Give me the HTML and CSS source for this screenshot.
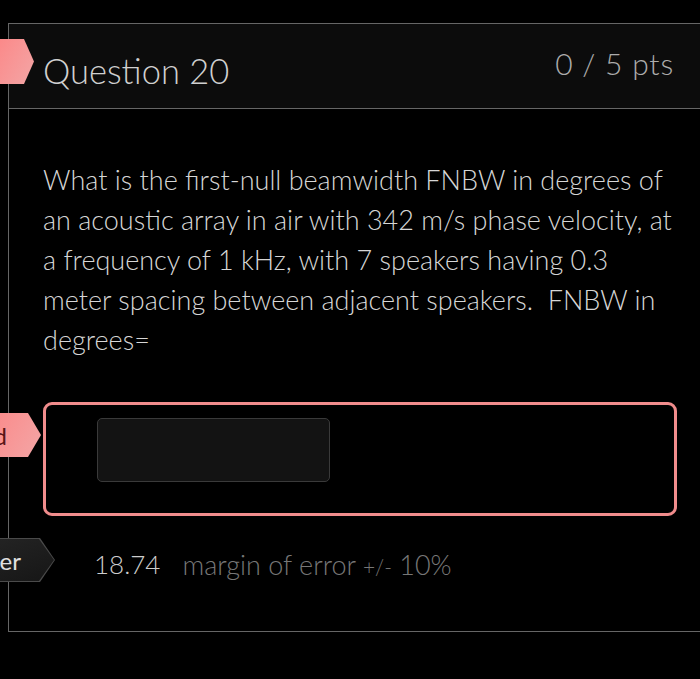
FILE: index.html
```html
<!DOCTYPE html>
<html lang="en">
<head>
<meta charset="utf-8">
<title>Question 20</title>
<link rel="stylesheet" href="styles.css">
</head>
<body>
<div class="page">
  <section class="card">
    <header class="card-header">
      <div class="tag tag-status"></div>
      <h2 class="q-title">Question 20</h2>
      <div class="q-points">0 / 5 pts</div>
    </header>
    <div class="card-body">
      <p class="q-text">What is the first-null beamwidth FNBW in degrees of an acoustic array in air with 342 m/s phase velocity, at a frequency of 1 kHz, with 7 speakers having 0.3 meter spacing between adjacent speakers.&nbsp; FNBW in degrees=</p>
      <div class="answer">
        <div class="tag tag-answered"><span>You Answered</span></div>
        <div class="answer-input"></div>
      </div>
      <div class="correct">
        <div class="tag tag-correct"><div class="tag-inner"><span>Correct Answer</span></div></div>
        <span class="correct-value">18.74</span>
        <span class="correct-margin">margin of error <span class="pm">+/-</span> 10%</span>
      </div>
    </div>
  </section>
</div>
</body>
</html>
```
FILE: styles.css
```css
html, body {
  margin: 0;
  padding: 0;
  background: #000;
  height: 100%;
  overflow: hidden;
}

body {
  font-family: "Lato Light", Lato, "Noto Sans", sans-serif;
  font-weight: 300;
  color: #d8d8d8;
}

.page {
  padding-top: 23px;
}

.card {
  margin: 0 -10px 0 8px;
  border: 1px solid #666;
  position: relative;
}

.card-header {
  position: relative;
  height: 84px;
  background: #0c0c0c;
  border-bottom: 1px solid #666;
  display: flex;
  justify-content: space-between;
  align-items: center;
  padding: 0 35px 0 34px;
}

.q-title {
  margin: 0;
  font-size: 34.5px;
  font-weight: 300;
  color: #d0d0d0;
  padding-top: 8px;
}

.q-points {
  font-size: 30px;
  letter-spacing: 0.8px;
  color: #acacac;
  padding-bottom: 6px;
}

.card-body {
  padding: 51px 0 49px 0;
}

.q-text {
  margin: 0;
  padding: 0 27px 0 34px;
  font-size: 27px;
  line-height: 40px;
  color: #d6d6d6;
}

.answer {
  position: relative;
  margin: 42px 32px 0 34px;
  border: 3px solid #f08c8c;
  border-radius: 9px;
  padding: 13px 0 31px 51px;
}

.answer-input {
  width: 231px;
  height: 62px;
  background: #131313;
  border: 1px solid #3a3a3a;
  border-radius: 5px;
}

.correct {
  position: relative;
  margin-top: 22px;
  height: 44px;
  display: flex;
  align-items: center;
  padding-left: 85px;
  padding-top: 8px;
  box-sizing: border-box;
}

.correct-value {
  font-size: 26px;
  color: #cdcdcd;
  margin-right: 22px;
}

.correct-margin {
  font-size: 27px;
  color: #777;
}

.correct-margin .pm {
  font-size: 21px;
}

.tag {
  position: absolute;
  clip-path: polygon(0 0, calc(100% - 10px) 0, 100% 50%, calc(100% - 10px) 100%, 0 100%);
  display: flex;
  align-items: center;
  justify-content: flex-end;
  box-sizing: border-box;
  font-family: Lato, "Noto Sans", sans-serif;
  font-size: 24px;
  font-weight: 400;
  white-space: nowrap;
}

.tag-status {
  left: -95px;
  top: 15px;
  width: 120px;
  height: 45px;
  background: linear-gradient(120deg, #ff6a6a 0%, #fb8a8a 60%, #f3a6a6 100%);
}

.tag-answered {
  left: -165px;
  top: 8px;
  width: 160px;
  height: 44px;
  padding-right: 34px;
  color: #5a1515;
  clip-path: polygon(0 0, calc(100% - 13px) 0, 100% 50%, calc(100% - 13px) 100%, 0 100%);
  background: linear-gradient(120deg, #ff6a6a 0%, #fb8a8a 60%, #f3a6a6 100%);
}

.tag-correct {
  left: -154px;
  top: 0;
  width: 200px;
  height: 44px;
  background: #4a4a4a;
  clip-path: polygon(0 0, calc(100% - 15px) 0, 100% 50%, calc(100% - 15px) 100%, 0 100%);
}

.tag-correct .tag-inner {
  position: absolute;
  inset: 1px 1px 1px 0;
  background: linear-gradient(160deg, #2e2e2e, #161616);
  clip-path: polygon(0 0, calc(100% - 15px) 0, 100% 50%, calc(100% - 15px) 100%, 0 100%);
  display: flex;
  align-items: center;
  justify-content: flex-end;
  padding-right: 33px;
  color: #e0e0e0;
}
```
